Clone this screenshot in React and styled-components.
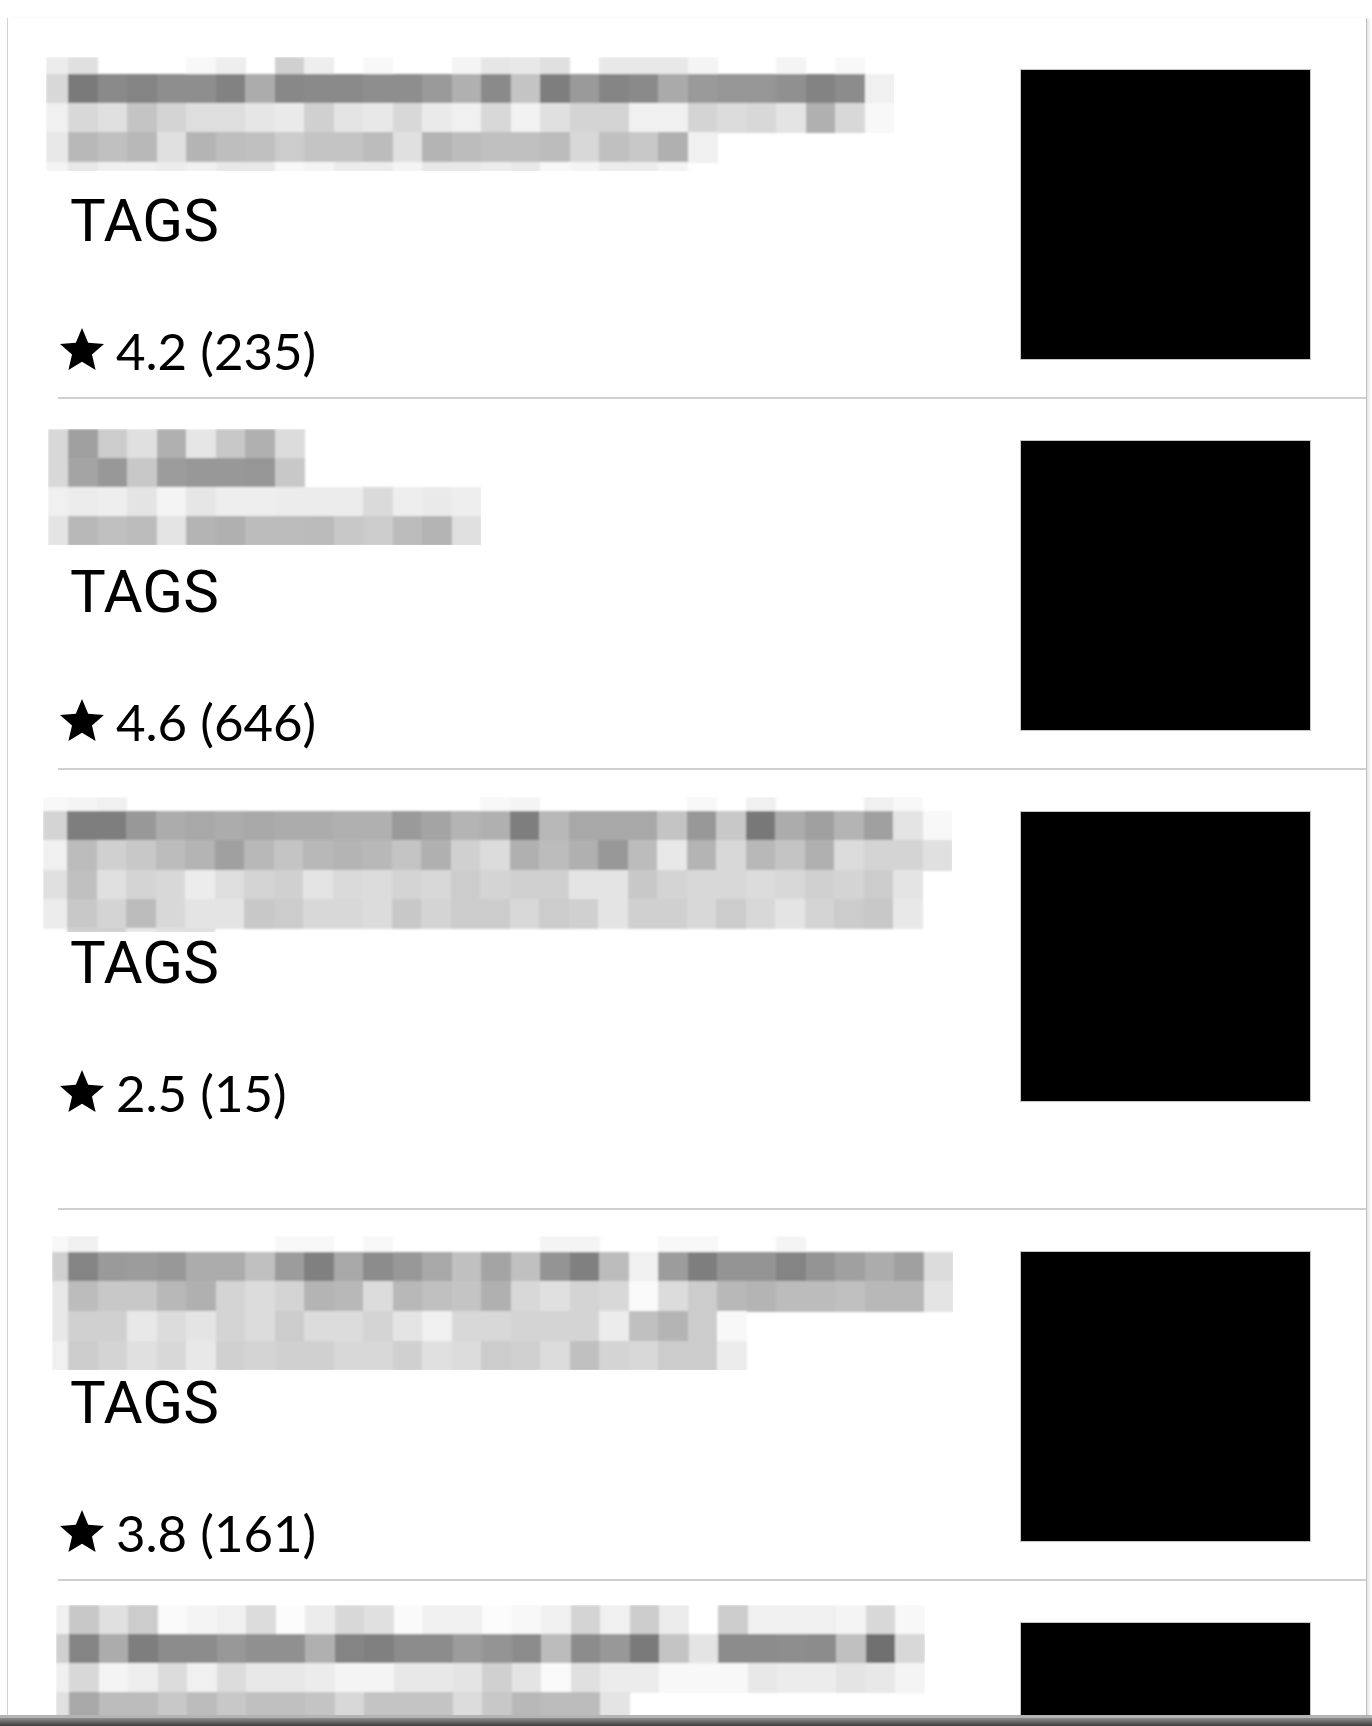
import React from 'react'
import styled, { createGlobalStyle } from 'styled-components'

const GlobalStyle = createGlobalStyle`
  html, body {
    margin: 0;
    padding: 0;
    background: #fff;
  }
  body {
    font-family: Roboto, "Liberation Sans", Arial, sans-serif;
    color: #000;
  }
`

const Screen = styled.div`
  height: 1726px;
  display: flex;
  flex-direction: column;
  overflow: hidden;
  background: #fff;
`
const Viewport = styled.div`
  flex: 1;
  min-height: 0;
  overflow: hidden;
  padding: 18px 5px 0 7px;
`
const Card = styled.div`
  border-left: 1px solid #d2d2d2;
  border-right: 1px solid #c2c2c2;
  box-shadow: 3px 0 3px -1px rgba(0, 0, 0, 0.12);
  padding-top: 10px;
  background: #fff;
  min-height: 100%;
`
const List = styled.div`
  margin-left: 50px;
`
const Row = styled.div`
  display: flex;
  align-items: flex-start;
  border-bottom: 2px solid #d0d0d0;
`
const TextCol = styled.div`
  flex: 1;
  min-width: 0;
  padding-bottom: ${p => 21 + (p.$extra || 0)}px;
`
const Title = styled.div`
  display: flow-root;
  height: 163px;
`
const MosaicSvg = styled.svg`
  display: block;
  margin-left: ${p => p.$x}px;
  margin-top: ${p => p.$y}px;
`
const Tags = styled.div`
  font-family: Roboto, "Liberation Sans", sans-serif;
  font-size: 60px;
  line-height: 60px;
  padding-left: 12px;
`
const Rating = styled.div`
  margin-top: 74px;
  padding-left: 2px;
  font-family: Lato, "Open Sans", sans-serif;
  font-size: 51px;
  line-height: 51px;
  white-space: nowrap;
  svg {
    margin-right: 12px;
  }
`
const Thumb = styled.div`
  flex-shrink: 0;
  width: 291px;
  height: 291px;
  box-sizing: border-box;
  margin: 41px 55px 0 0;
  background: #000;
  border: 1px solid #c6c6c6;
`
const BottomLine = styled.div`
  height: 3px;
  background: #b4b4b4;
`
const BottomShade = styled.div`
  height: 8px;
  background: linear-gradient(#8e8e8e, #3c3c3c);
`

const Star = () => (
  <svg width="44" height="42" viewBox="2 2 20 19">
    <path d="M12 17.27L18.18 21l-1.64-7.03L22 9.24l-7.19-.61L12 2 9.19 8.63 2 9.24l5.46 4.73L5.82 21z" fill="#000" />
  </svg>
)

// blurred title: rows of [height, cells], first cell is the partial left edge
const Mosaic = ({ data, id }) => {
  const { x, y, left, col = 29.5, rows } = data
  const parsed = rows.map(([h, s]) => ({ h, cells: s.split(' ') }))
  const count = Math.max(...parsed.map(r => r.cells.length))
  const width = left + (count - 1) * col
  const height = parsed.reduce((sum, r) => sum + r.h, 0)
  let top = 0
  return (
    <MosaicSvg width={width} height={height} $x={x} $y={y}>
      <defs>
        <filter id={id} x="-2%" y="-5%" width="104%" height="110%">
          <feGaussianBlur stdDeviation="0.9" />
        </filter>
      </defs>
      <g filter={`url(#${id})`} shapeRendering="crispEdges">
        {parsed.map((r, ri) => {
          const rowTop = top
          top += r.h
          return r.cells.map((c, ci) => {
            if (c === '--') return null
            const cx = ci === 0 ? 0 : left + (ci - 1) * col
            const cw = ci === 0 ? left : col
            return (
              <rect key={ri + '-' + ci} x={cx} y={rowTop} width={cw + 0.6} height={r.h + 0.6} fill={'#' + c + c + c} />
            )
          })
        })}
      </g>
    </MosaicSvg>
  )
}

const items = [
  {
    score: '4.2',
    count: '(235)',
    title: {
      x: -12, y: 29, left: 22,
      rows: [
        [17, 'ec e0 -- -- -- f8 ee -- d0 ee -- f8 -- -- f4 e6 e8 e0 -- e8 e8 e8 f4 -- -- f4 -- f8'],
        [29, 'd8 7a 8a 84 8e 8e 82 ac 88 8a 8a 8e 8e 9a b0 8a c4 7e 9a 85 8a aa 9a 96 96 90 83 8c f0'],
        [29, 'f0 d8 e0 c4 d4 de de e6 ea d0 e4 e8 d8 ea f0 d8 f2 e0 d4 d4 f0 f0 d4 dc d8 e4 b0 d8 f8'],
        [30, 'e8 b8 c0 b8 e0 b4 be c0 cc c4 c4 bc e0 b4 bc c0 c0 bc d8 c0 c8 b0 f0'],
        [9, 'f4 e8 f0 f0 ec f0 e8 e8 f8 f4 ec ec f4 e8 e8 ec e8 f8 f4 ec ec f4'],
      ],
    },
  },
  {
    score: '4.6',
    count: '(646)',
    title: {
      x: -10, y: 30, left: 20,
      rows: [
        [29, 'd8 a0 cc e0 b0 e6 c8 b0 dc'],
        [29, 'd8 a4 98 c8 9c 98 98 96 c8'],
        [29, 'f0 ec ee e4 f4 e6 ee ee ec ec ec da ee ea ee'],
        [29, 'e4 b8 c0 bc e4 b4 b0 bc bc ba c8 cc bc b4 e0'],
      ],
    },
  },
  {
    score: '2.5',
    count: '(15)',
    extra: 69,
    title: {
      x: -15, y: 27, left: 24,
      rows: [
        [14, 'f8 f4 f0 -- -- -- -- -- -- -- -- -- -- -- -- f8 f4 -- -- -- -- -- f8 -- f0 -- -- -- f0 f8'],
        [29, 'd4 7e 7e 98 ac a8 ac a8 ac ac b0 b0 9a a4 b4 b0 7e b8 a8 a8 a8 c4 98 c8 78 ac a0 b4 a0 e4 f8'],
        [30, 'f0 bc d0 c8 bc b4 a0 b8 c4 b8 b4 b8 c4 b0 d0 dc b0 bc b0 98 bc e8 b4 d8 b8 c4 b0 dc d4 d4 e0'],
        [29, 'e0 c0 e0 d4 d8 ec de d4 d0 e4 da dc d4 d8 cc d4 d0 d0 e4 e4 c8 d4 d8 d8 dc d8 d0 d4 cc e4'],
        [29, 'ec c8 d4 bc d8 e4 e4 c8 cc d8 d8 dc c8 d4 cc cc d8 cc d0 e4 d0 d0 d8 cc d8 e4 d4 cc c8 e8'],
        [4, '-- d0 d0 e8 e0 e0'],
      ],
    },
  },
  {
    score: '3.8',
    count: '(161)',
    title: {
      x: -6, y: 26, left: 16,
      rows: [
        [16, 'f8 f0 -- -- -- -- -- -- f8 f8 -- f8 -- -- -- -- -- f4 f4 -- -- f8 f8 -- -- f4'],
        [29, 'd0 84 9a 9c 98 ac ac c0 9c 80 a8 8c 98 a8 c0 a4 c0 94 80 bc f0 9c 7e 94 94 84 94 a0 ac a0 dc'],
        [30, 'e8 bc c8 c8 b8 b0 d4 dc d4 b4 b8 dc b8 c0 c4 b0 d8 e0 d4 d8 fa dc cc b8 b4 bc bc c0 b8 b8 e4'],
        [30, 'e8 d0 d0 e8 dc e4 d4 dc cc dc dc d4 e4 f0 d8 d8 d4 d4 d4 ec c0 b4 cc f8'],
        [29, 'f0 cc d4 e0 d8 e8 d0 d4 d0 d0 d8 d8 d0 e0 dc cc d0 dc c0 d4 d8 cc cc ec'],
      ],
    },
  },
  {
    score: '4.1',
    count: '(88)',
    title: {
      x: -2, y: 24, left: 13,
      rows: [
        [29, 'f0 c8 e0 cc fa f4 f0 dc fc ec d8 e0 fa f0 f0 fc f8 f0 d4 f0 cc ec -- cc f0 f0 f0 f4 d8 f8'],
        [29, 'd0 84 ac 7e 8c 8c 98 90 90 b0 84 80 8c 8c 9c 94 8c bc 8c 98 7a c4 e4 8c 8c 8e 8c c0 70 d8'],
        [29, 'f0 d8 f4 ee dc f0 dc e8 e8 ec f4 f4 e8 e8 e4 d0 e4 fa e0 ec ec f8 f8 f8 e8 ec ec e4 e8 f4'],
        [29, 'e0 a8 bc bc c8 bc c8 c0 c0 c4 d8 c4 c4 c4 dc c8 b8 bc bc e4'],
      ],
    },
  },
]

const Item = ({ item, index }) => (
  <Row>
    <TextCol $extra={item.extra}>
      <Title>
        <Mosaic data={item.title} id={'blur' + index} />
      </Title>
      <Tags>TAGS</Tags>
      <Rating>
        <Star />
        {item.score} {item.count}
      </Rating>
    </TextCol>
    <Thumb />
  </Row>
)

const App = () => (
  <Screen>
    <GlobalStyle />
    <Viewport>
      <Card>
        <List>
          {items.map((item, i) => (
            <Item key={i} item={item} index={i} />
          ))}
        </List>
      </Card>
    </Viewport>
    <BottomLine />
    <BottomShade />
  </Screen>
)

export default App
